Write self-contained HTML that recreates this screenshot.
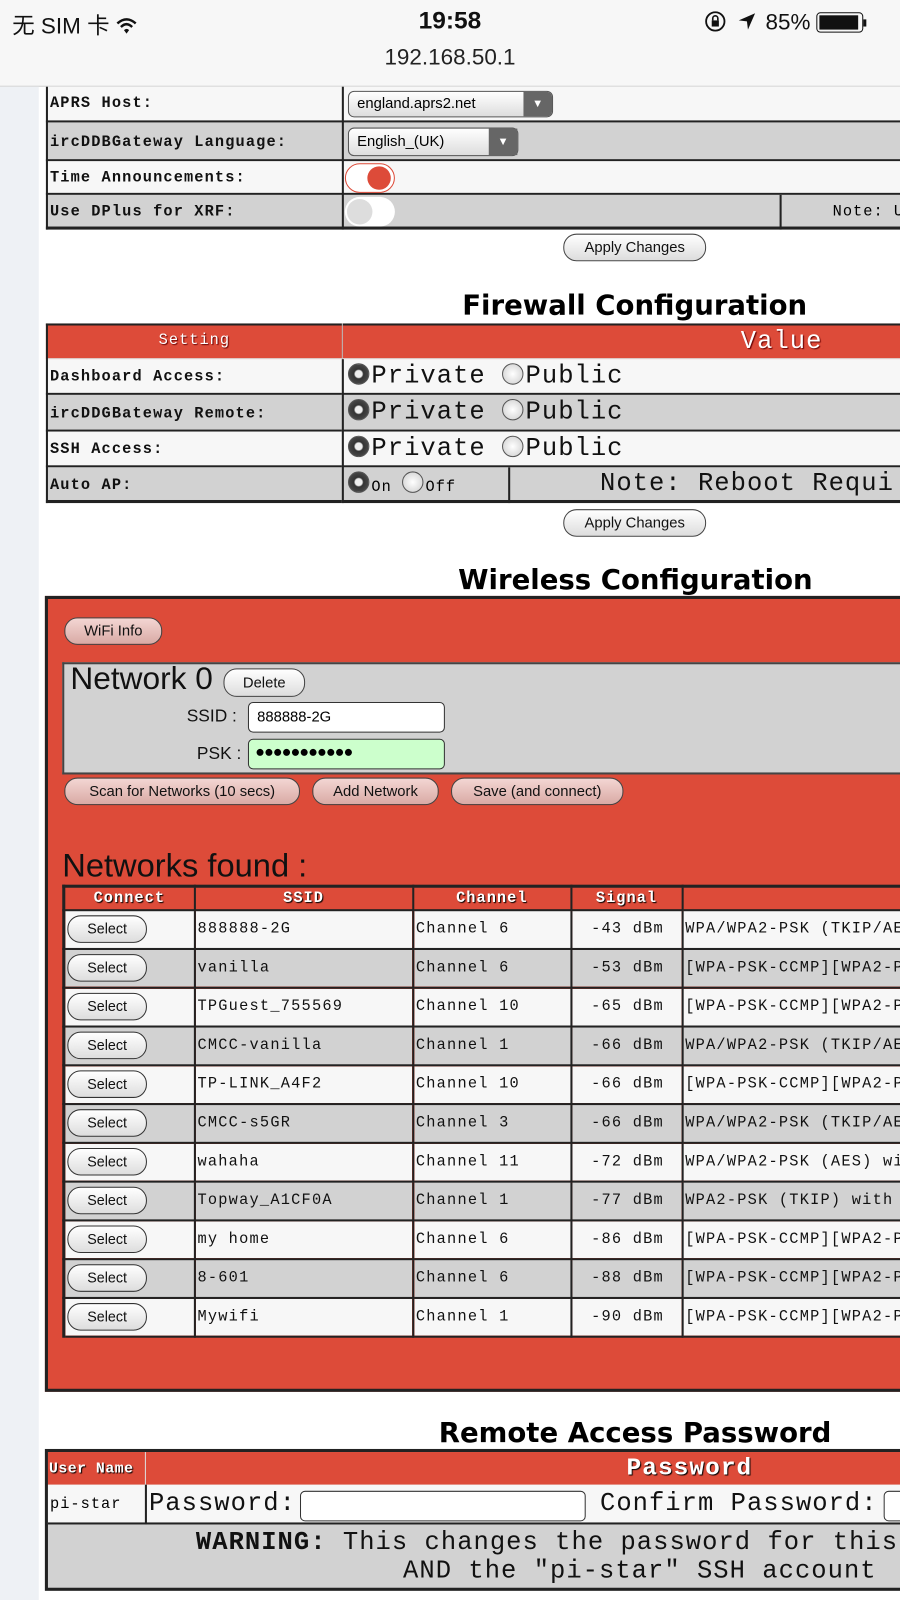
<!DOCTYPE html>
<html><head><meta charset="utf-8"><style>
*{box-sizing:border-box;margin:0;padding:0}
body{width:900px;height:1600px;overflow:hidden;background:#fff;position:relative;font-family:"Liberation Sans",sans-serif}
#w{position:absolute;left:0;top:0;width:882px;height:1568px;transform:scale(1.0204);transform-origin:0 0;overflow:hidden}
.a{position:absolute}
.sb{left:0;top:0;width:882px;height:85px;background:#f7f7f7;border-bottom:1px solid #cfcfcf}
.strip{left:0;top:85px;width:38px;height:1515px;background:#eef1f5}
.mono{font-family:"Liberation Mono",monospace;letter-spacing:1px;white-space:nowrap}
.lbl{font-family:"Liberation Mono",monospace;font-weight:bold;font-size:15px;color:#111;letter-spacing:1.1px;white-space:nowrap}
.row{position:absolute;left:45px;width:860px;border-bottom:2px solid #222}
.lt{background:#f7f7f7}.dk{background:#d2d2d2}
.vl{position:absolute;width:2px;background:#222}
.btn{position:absolute;border:1.5px solid #444;border-radius:13px;background:linear-gradient(#fff,#ddd);font-size:14.5px;color:#111;text-align:center;font-family:"Liberation Sans",sans-serif}
.rbtn{position:absolute;border:1.5px solid #444;border-radius:13px;background:linear-gradient(#f3d6d3,#d9aaa5);font-size:14.5px;color:#111;text-align:center}
.h2{position:absolute;font-family:"DejaVu Sans",sans-serif;font-weight:bold;font-size:27px;color:#000}
.radio{display:inline-block;width:21px;height:21px;border-radius:50%;border:1.5px solid #555;background:radial-gradient(#fff,#ccc);vertical-align:-2px;margin-right:2px}
.radio.on{background:radial-gradient(#eee 0 25%,#333 35%,#555)}
.fw{font-family:"Liberation Mono",monospace;font-size:25px;color:#111;letter-spacing:1px;white-space:pre}
.nt td{height:38px;border:2px solid #222;font-family:"Liberation Mono",monospace;font-size:15px;color:#111;padding-left:2px;letter-spacing:1.2px;white-space:nowrap;overflow:hidden}
.nt th{height:23px;border:2px solid #222;border-top:none;background:#dd4b39;color:#fff;font-family:"Liberation Mono",monospace;font-size:15px;text-shadow:1px 1px 1px #000;letter-spacing:1px}
.sel{display:inline-block;width:78px;height:27px;border:1.5px solid #333;border-radius:13px;background:linear-gradient(#fff,#ddd);font-family:"Liberation Sans",sans-serif;font-size:14px;text-align:center;line-height:25px;letter-spacing:0}
</style></head><body><div id="w">
<div class="a sb"></div>
<div class="a" style="left:12px;top:8px;font-size:22px;color:#111;font-family:'Liberation Sans','Noto Sans CJK SC',sans-serif">无 SIM 卡
<svg width="22" height="18" viewBox="0 0 22 18" style="vertical-align:-1px"><path d="M2 7 Q11 -1 20 7" stroke="#111" stroke-width="2.4" fill="none"/><path d="M5.5 10.5 Q11 5 16.5 10.5" stroke="#111" stroke-width="2.4" fill="none"/><path d="M8.5 13.5 L11 17 L13.5 13.5 Q11 11 8.5 13.5Z" fill="#111"/></svg></div>
<div class="a" style="left:0;width:882px;top:7px;text-align:center;font-size:24px;font-weight:bold;color:#111">19:58</div>
<div class="a" style="left:0;width:882px;top:43px;text-align:center;font-size:22px;color:#222">192.168.50.1</div>
<div class="a" style="left:690px;top:9px;font-size:22px;color:#111;white-space:nowrap">
<svg width="22" height="22" viewBox="0 0 22 22" style="vertical-align:-3px"><circle cx="11" cy="11" r="9" fill="none" stroke="#111" stroke-width="1.8"/><rect x="7.5" y="10" width="7" height="6" fill="#111"/><path d="M8.5 10 V8 a2.5 2.5 0 0 1 5 0 V10" stroke="#111" stroke-width="1.6" fill="none"/></svg>
<svg width="20" height="20" viewBox="0 0 20 20" style="vertical-align:-2px;margin-left:4px"><path d="M18 2 L2 9 L10 10 L11 18Z" fill="#111"/></svg>
<span style="margin-left:2px">85%</span>
<span style="display:inline-block;width:46px;height:20px;border:1.5px solid #111;border-radius:4px;vertical-align:-3px;padding:2px"><span style="display:block;width:38px;height:14px;background:#111"></span></span><span style="display:inline-block;width:3px;height:7px;background:#111;vertical-align:3px"></span>
</div>
<div class="a strip"></div>

<!-- top table -->
<div class="row lt" style="top:85px;height:35px"></div>
<div class="row dk" style="top:120px;height:38px"></div>
<div class="row lt" style="top:158px;height:33px"></div>
<div class="row dk" style="top:191px;height:34px;border-bottom-width:3px"></div>
<div class="vl" style="left:45px;top:85px;height:140px"></div>
<div class="vl" style="left:335px;top:85px;height:140px"></div>
<div class="vl" style="left:764px;top:191px;height:34px"></div>
<div class="a lbl" style="left:49px;top:93px">APRS Host:</div>
<div class="a lbl" style="left:49px;top:131px">ircDDBGateway Language:</div>
<div class="a lbl" style="left:49px;top:166px">Time Announcements:</div>
<div class="a lbl" style="left:49px;top:199px">Use DPlus for XRF:</div>
<div class="a" style="left:341px;top:89px;width:201px;height:26px;border:1px solid #555;border-radius:6px;background:linear-gradient(#fff,#ddd);font-size:14.5px;padding:4px 8px;overflow:hidden">england.aprs2.net<span class="a" style="right:0;top:0;width:28px;height:24px;background:#666;color:#fff;font-size:11px;text-align:center;line-height:24px">▼</span></div>
<div class="a" style="left:341px;top:125px;width:167px;height:28px;border:1px solid #555;border-radius:6px;background:linear-gradient(#fff,#ddd);font-size:14.5px;padding:5px 8px">English_(UK)<span class="a" style="right:0;top:0;width:28px;height:26px;background:#666;color:#fff;font-size:11px;text-align:center;line-height:26px">▼</span></div>
<div class="a" style="left:338px;top:160px;width:49px;height:29px;border:1.5px solid #dd4b39;border-radius:15px;background:#fff"><div class="a" style="left:21px;top:2px;width:23px;height:23px;border-radius:50%;background:#dd4b39"></div></div>
<div class="a" style="left:338px;top:193px;width:49px;height:29px;border-radius:15px;background:#fff"><div class="a" style="left:2px;top:2px;width:25px;height:25px;border-radius:50%;background:#ddd"></div></div>
<div class="a mono" style="left:816px;top:199px;font-size:15px">Note: U</div>
<div class="btn" style="left:552px;top:229px;width:140px;height:27px;line-height:27px">Apply Changes</div>

<!-- firewall -->
<div class="h2" style="left:453px;top:284px">Firewall Configuration</div>
<div class="row" style="top:317px;height:35px;background:#dd4b39;border-top:2px solid #222;border-bottom:1px solid #ddd"></div>
<div class="a mono" style="left:45px;width:291px;top:325px;text-align:center;color:#fff;font-size:15px;text-shadow:1px 1px 1px #600">Setting</div>
<div class="a mono" style="left:726px;top:320px;color:#fff;font-size:25px;text-shadow:1px 1px 1px #600">Value</div>
<div class="row lt" style="top:352px;height:35px"></div>
<div class="row dk" style="top:387px;height:36px"></div>
<div class="row lt" style="top:423px;height:35px"></div>
<div class="row dk" style="top:458px;height:35px;border-bottom-width:3px"></div>
<div class="vl" style="left:45px;top:317px;height:176px"></div>
<div class="vl" style="left:335px;top:317px;height:176px;background:#bbb;width:1px"></div>
<div class="vl" style="left:335px;top:352px;height:141px"></div>
<div class="vl" style="left:498px;top:458px;height:35px"></div>
<div class="a lbl" style="left:49px;top:361px">Dashboard Access:</div>
<div class="a lbl" style="left:49px;top:397px">ircDDGBateway Remote:</div>
<div class="a lbl" style="left:49px;top:432px">SSH Access:</div>
<div class="a lbl" style="left:49px;top:467px">Auto AP:</div>
<div class="a fw" style="left:341px;top:354px"><span class="radio on"></span>Private <span class="radio"></span>Public</div>
<div class="a fw" style="left:341px;top:389px"><span class="radio on"></span>Private <span class="radio"></span>Public</div>
<div class="a fw" style="left:341px;top:425px"><span class="radio on"></span>Private <span class="radio"></span>Public</div>
<div class="a mono" style="left:341px;top:462px;font-size:15px"><span class="radio on"></span>On <span class="radio"></span>Off</div>
<div class="a fw" style="left:588px;top:459px">Note: Reboot Requi</div>
<div class="btn" style="left:552px;top:499px;width:140px;height:27px;line-height:27px">Apply Changes</div>

<!-- wireless -->
<div class="h2" style="left:449px;top:553px">Wireless Configuration</div>
<div class="a" style="left:44px;top:584px;width:860px;height:780px;border:3px solid #222;background:#dd4b39"></div>
<div class="rbtn" style="left:63px;top:605px;width:96px;height:27px;line-height:27px">WiFi Info</div>
<div class="a" style="left:61px;top:649px;width:840px;height:110px;background:#d2d2d2;border:2px solid #444;border-right:none"></div>
<div class="a" style="left:69px;top:647px;font-size:31px;color:#111">Network 0</div>
<div class="btn" style="left:219px;top:655px;width:80px;height:28px;line-height:28px">Delete</div>
<div class="a" style="left:183px;top:692px;font-size:17px;color:#111">SSID :</div>
<div class="a" style="left:243px;top:688px;width:193px;height:30px;border:1.5px solid #333;border-radius:5px;background:#fff;font-size:14.5px;padding:6px 8px">888888-2G</div>
<div class="a" style="left:193px;top:729px;font-size:17px;color:#111">PSK :</div>
<div class="a" style="left:243px;top:724px;width:193px;height:30px;border:1.5px solid #333;border-radius:5px;background:#ccffcc;font-size:16px;padding:4px 6px;letter-spacing:-1px">●●●●●●●●●●●</div>
<div class="rbtn" style="left:63px;top:762px;width:231px;height:27px;line-height:27px">Scan for Networks (10 secs)</div>
<div class="rbtn" style="left:306px;top:762px;width:124px;height:27px;line-height:27px">Add Network</div>
<div class="rbtn" style="left:442px;top:762px;width:169px;height:27px;line-height:27px">Save (and connect)</div>
<div class="a" style="left:61px;top:830px;font-size:32px;color:#111">Networks found :</div>
<table class="nt a" style="left:61px;top:867px;width:860px;border-collapse:collapse;border-top:3px solid #222;border-left:3px solid #222;table-layout:fixed">
<tr><th style="width:128px">Connect</th><th style="width:214px">SSID</th><th style="width:155px">Channel</th><th style="width:109px">Signal</th><th></th></tr>
<tr style="background:#f7f7f7"><td><span class="sel">Select</span></td><td>888888-2G</td><td>Channel 6</td><td style="text-align:center">-43 dBm</td><td>WPA/WPA2-PSK (TKIP/AE</td></tr>
<tr style="background:#d2d2d2"><td><span class="sel">Select</span></td><td>vanilla</td><td>Channel 6</td><td style="text-align:center">-53 dBm</td><td>[WPA-PSK-CCMP][WPA2-P</td></tr>
<tr style="background:#f7f7f7"><td><span class="sel">Select</span></td><td>TPGuest_755569</td><td>Channel 10</td><td style="text-align:center">-65 dBm</td><td>[WPA-PSK-CCMP][WPA2-P</td></tr>
<tr style="background:#d2d2d2"><td><span class="sel">Select</span></td><td>CMCC-vanilla</td><td>Channel 1</td><td style="text-align:center">-66 dBm</td><td>WPA/WPA2-PSK (TKIP/AE</td></tr>
<tr style="background:#f7f7f7"><td><span class="sel">Select</span></td><td>TP-LINK_A4F2</td><td>Channel 10</td><td style="text-align:center">-66 dBm</td><td>[WPA-PSK-CCMP][WPA2-P</td></tr>
<tr style="background:#d2d2d2"><td><span class="sel">Select</span></td><td>CMCC-s5GR</td><td>Channel 3</td><td style="text-align:center">-66 dBm</td><td>WPA/WPA2-PSK (TKIP/AE</td></tr>
<tr style="background:#f7f7f7"><td><span class="sel">Select</span></td><td>wahaha</td><td>Channel 11</td><td style="text-align:center">-72 dBm</td><td>WPA/WPA2-PSK (AES) wi</td></tr>
<tr style="background:#d2d2d2"><td><span class="sel">Select</span></td><td>Topway_A1CF0A</td><td>Channel 1</td><td style="text-align:center">-77 dBm</td><td>WPA2-PSK (TKIP) with </td></tr>
<tr style="background:#f7f7f7"><td><span class="sel">Select</span></td><td>my home</td><td>Channel 6</td><td style="text-align:center">-86 dBm</td><td>[WPA-PSK-CCMP][WPA2-P</td></tr>
<tr style="background:#d2d2d2"><td><span class="sel">Select</span></td><td>8-601</td><td>Channel 6</td><td style="text-align:center">-88 dBm</td><td>[WPA-PSK-CCMP][WPA2-P</td></tr>
<tr style="background:#f7f7f7"><td><span class="sel">Select</span></td><td>Mywifi</td><td>Channel 1</td><td style="text-align:center">-90 dBm</td><td>[WPA-PSK-CCMP][WPA2-P</td></tr>
</table>

<!-- remote access -->
<div class="h2" style="left:430px;top:1389px">Remote Access Password</div>
<div class="a" style="left:44px;top:1420px;width:860px;height:139px;border:3px solid #222;background:#d2d2d2"></div>
<div class="a" style="left:47px;top:1423px;width:860px;height:32px;background:#dd4b39"></div>
<div class="a" style="left:47px;top:1455px;width:860px;height:39px;background:#f7f7f7;border-bottom:2px solid #222"></div>
<div class="vl" style="left:142px;top:1423px;height:32px;width:1px;background:#ddd"></div>
<div class="vl" style="left:142px;top:1455px;height:39px;width:1.5px"></div>
<div class="a mono" style="left:48px;top:1432px;color:#fff;font-size:14.5px;font-weight:bold;text-shadow:1px 1px 1px #000;letter-spacing:0.5px">User Name</div>
<div class="a mono" style="left:614px;top:1426px;color:#fff;font-size:24px;font-weight:bold;text-shadow:1px 1px 1px #000;letter-spacing:1px">Password</div>
<div class="a mono" style="left:49px;top:1466px;font-size:15px">pi-star</div>
<div class="a fw" style="left:146px;top:1459px">Password:</div>
<div class="a" style="left:294px;top:1461px;width:280px;height:30px;border:1.5px solid #333;border-radius:5px;background:#fff"></div>
<div class="a fw" style="left:588px;top:1459px">Confirm Password:</div>
<div class="a" style="left:866px;top:1461px;width:40px;height:30px;border:1.5px solid #333;border-radius:5px;background:#fff"></div>
<div class="a fw" style="left:192px;top:1497px"><b>WARNING:</b> This changes the password for this</div>
<div class="a fw" style="left:395px;top:1525px">AND the "pi-star" SSH account</div>
</div></body></html>
